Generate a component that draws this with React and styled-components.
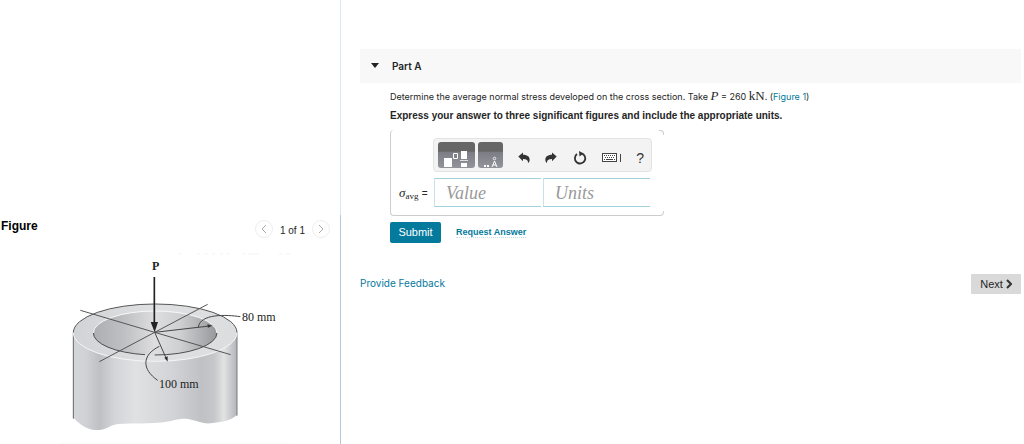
import React from "react";
import styled, { createGlobalStyle } from "styled-components";

const Global = createGlobalStyle`
  * { box-sizing: border-box; }
  body {
    margin: 0;
    background: #fff;
    color: #252525;
    font-family: "Liberation Sans", Arial, sans-serif;
    font-size: 9px;
    line-height: 12px;
  }
  button, input { font: inherit; color: inherit; margin: 0; }
  button { border: 0; padding: 0; cursor: pointer; }
  svg { display: block; }
`;

const Page = styled.div`
  display: grid;
  grid-template-columns: 341px minmax(0, 1fr);
  min-height: 100vh;
`;

const FigurePane = styled.aside`
  padding: 219px 1px 0 0;
  background: linear-gradient(#d9e7f3 0 215px, #b4c8da 215px) right / 1px 100% no-repeat;
`;

const FigureBar = styled.header`
  display: flex;
  align-items: center;
  justify-content: space-between;
  height: 20px;
  padding: 0 10px 0 1px;
`;

const FigureTitle = styled.h2`
  margin: 0 0 6px;
  font-size: 12px;
  line-height: 14px;
  color: #000;
`;

const Pager = styled.nav`
  display: flex;
  align-items: center;
  gap: 7px;
  font-size: 10px;
  line-height: 14px;
`;

const PageCount = styled.span`
  padding-top: 4px;
`;

const PagerButton = styled.button`
  display: grid;
  place-items: center;
  width: 18px;
  height: 18px;
  border: 1px solid #eee;
  border-radius: 50%;
  background: #fff;
`;

const Drawing = styled.svg`
  margin: 11px 0 0 60px;
`;

const Label = styled.text`
  font-family: "Liberation Serif", serif;
  font-size: 12px;
  font-weight: ${(p) => (p.$bold ? 700 : 400)};
  fill: #222;
`;

const Main = styled.main`
  padding: 49px 3px 0 19px;
`;

const PartHeader = styled.header`
  display: flex;
  align-items: center;
  gap: 13px;
  height: 34px;
  padding: 0 0 1px 11px;
  background: #f8f8f8;
`;

const PartTitle = styled.h1`
  margin: 0;
  font-family: Inter, sans-serif;
  font-size: 10px;
  font-weight: 600;
  line-height: 14px;
`;

const Toggle = styled.button`
  background: none;
`;

const Body = styled.section`
  padding: 7px 0 0 30px;
`;

const Question = styled.p`
  margin: 0 0 7px;
  font-family: Inter, sans-serif;
`;

const Instruction = styled.p`
  margin: 0 0 8px;
  font-size: 10px;
  font-weight: 700;
`;

const Var = styled.span`
  font-family: "Liberation Serif", serif;
  font-size: 13px;
  line-height: 12px;
  font-style: ${(p) => (p.$italic ? "italic" : "normal")};
`;

const Link = styled.a`
  color: #047a9c;
  text-decoration: none;
`;

const AnswerBox = styled.div`
  position: relative;
  width: 274px;
  padding: 8px 12px 8px 8px;
  border-left: 1px solid #ccc;
  border-bottom: 1px solid #ccc;
  border-radius: 4px;

  &::before, &::after {
    content: "";
    position: absolute;
    right: 0;
    width: 4px;
    height: 4px;
    border-right: 1px solid #ccc;
  }
  &::before { top: 0; border-top: 1px solid #ccc; border-top-right-radius: 4px; }
  &::after { bottom: 0; border-bottom-right-radius: 4px; }
`;

const Toolbar = styled.div`
  display: flex;
  align-items: center;
  height: 34px;
  margin-left: 34px;
  padding: 0 7px 0 4px;
  border: 1px solid #e3e3e3;
  border-radius: 4px;
  background: #f3f3f3;
`;

const PaletteButton = styled.button`
  width: ${(p) => p.$width}px;
  height: 26px;
  margin-right: 3px;
  border-radius: 3px;
  overflow: hidden;
  background: linear-gradient(#666 0 36%, #7c7c84 38%, #94949c 100%);
`;

const Tools = styled.div`
  display: flex;
  justify-content: space-between;
  flex: 1;
  margin-left: 12px;
  padding-top: 5px;
`;

const Tool = styled.button`
  display: grid;
  place-items: center;
  height: 26px;
  background: none;
  color: #333;
  font-size: 14px;
`;

const EntryRow = styled.div`
  display: flex;
  align-items: center;
  margin-top: 6px;
`;

const Symbol = styled.label`
  width: 35px;
  font-family: "Liberation Serif", serif;
  font-size: 13px;
  line-height: 14px;
  white-space: nowrap;

  sub { font-size: 9px; line-height: 0; vertical-align: -2px; }
  b { font: 10px "Liberation Sans", sans-serif; }
`;

const Entry = styled.input`
  width: 107px;
  height: 29px;
  margin-right: 2px;
  padding: 1px 11px 0;
  border: solid #a3d0dc;
  border-width: 1px 0 1px 1px;
  border-left-color: #c6e2ea;
  border-radius: 0;
  outline: 0;
  font: italic 18px "Liberation Serif", serif;

  &::placeholder { color: #999; opacity: 1; }
`;

const Actions = styled.div`
  display: flex;
  align-items: center;
  gap: 15px;
  margin-top: 6px;
`;

const Submit = styled.button`
  width: 51px;
  height: 21px;
  padding-bottom: 2px;
  border-radius: 2px;
  background: #047a9c;
  color: #fff;
  font-size: 11px;
`;

const RequestLink = styled(Link)`
  font-weight: 700;
  border-bottom: 1px dotted #c5e0e8;
  line-height: 10px;
`;

const Footer = styled.footer`
  display: flex;
  align-items: center;
  justify-content: space-between;
  margin-top: 31px;
`;

const FeedbackLink = styled(Link)`
  padding-bottom: 2px;
  font-family: Inter, sans-serif;
  font-size: 10px;
`;

const Next = styled.button`
  display: flex;
  align-items: center;
  justify-content: center;
  gap: 3px;
  width: 50px;
  height: 20px;
  border-radius: 1px;
  background: #d9d9d9;
  font-size: 11px;
`;

const Chevron = ({ left }) => (
  <svg width="8" height="10" viewBox="0 0 8 10" fill="none" stroke="#aaa" strokeWidth="1">
    <path d={left ? "M6 1 2 5l4 4" : "M2 1l4 4-4 4"} />
  </svg>
);

const CurvedArrow = ({ flip }) => (
  <svg width="12" height="12" viewBox="0 0 12 12" fill="#333">
    <path
      transform={flip ? "matrix(-1 0 0 1 12 0)" : undefined}
      d="M0.300 4.600 5 0.500v2.300c4.600 0 7 2.400 6.600 5.400-.1 1.300-.7 2.200-1.600 2.900.3-2.800-1.300-4.200-5-4.200v2.300z"
    />
  </svg>
);

const Cylinder = () => (
  <Drawing width="230" height="194" viewBox="0 0 230 194" role="img" aria-label="Hollow cylinder under load P">
    <defs>
      <linearGradient id="wall">
        <stop offset="0" stopColor="#d4d5d9" />
        <stop offset="0.08" stopColor="#d0d1d4" />
        <stop offset="0.16" stopColor="#bfc0c4" />
        <stop offset="0.25" stopColor="#d3d4d7" />
        <stop offset="0.38" stopColor="#e0e1e3" />
        <stop offset="0.6" stopColor="#d3d4d7" />
        <stop offset="0.78" stopColor="#c0c1c5" />
        <stop offset="0.86" stopColor="#c6c7ca" />
        <stop offset="0.92" stopColor="#e2e2e4" />
        <stop offset="1" stopColor="#b4b5b9" />
      </linearGradient>
      <linearGradient id="rim">
        <stop offset="0" stopColor="#d2d3d6" />
        <stop offset="0.5" stopColor="#dfe0e2" />
        <stop offset="1" stopColor="#dcdddf" />
      </linearGradient>
      <linearGradient id="bore">
        <stop offset="0" stopColor="#adaeb2" />
        <stop offset="0.25" stopColor="#bfc0c3" />
        <stop offset="0.5" stopColor="#dedee0" />
        <stop offset="0.7" stopColor="#cfd0d2" />
        <stop offset="1" stopColor="#97989c" />
      </linearGradient>
    </defs>
    <path d="M118 4h3M137 4h3M144 4h4M152 4h3M160 4h3M166 4h4M182 4h4M188 4h11M219 4h4M226 4h4" stroke="#f3f3f3" />
    <path d="M0 193h230" stroke="#fafafa" />
    <g transform="scale(.33333)" fill="none" strokeWidth="3" stroke="#555">
      <path fill="url(#wall)" stroke="none" d="M40 248V503C65 530 90 541 115 540C142 539 150 524 175 522C220 520 270 522 310 517C338 513 350 506 375 506C405 507 425 523 452 520C485 515 510 514 531 495V248z" />
      <path d="M40 248V506" stroke="#666" />
      <path d="M531 248V497" stroke="#777" />
      <ellipse cx="285.500" cy="248" rx="245.500" ry="86" fill="url(#rim)" stroke="none" />
      <path d="M40 248A245.500 86 0 0 1 531 248" stroke="#555" />
      <path d="M40 248A245.500 86 0 0 0 531 248" stroke="#f5f5f6" />
      <ellipse cx="285.500" cy="249" rx="185.500" ry="66" fill="url(#bore)" stroke="none" />
      <path d="M100 249A185.500 66 0 0 1 471 249" stroke="#f8f8f8" />
      <path d="M100 249A185.500 66 0 0 0 255 314M284 315A185.500 66 0 0 0 471 249" stroke="#4c4c4e" />
      <path d="M61 181 284 247 512 314M118 335 284 247 443 163" />
      <path d="M284 247 449 228M284 247 320 328M541 200C500 194 420 190 415 232M298 289C245 315 245 358 293 391" stroke="#444" />
      <path d="M283 81V220" stroke="#222" strokeWidth="5" />
      <path d="M272 216h22l-10 31z" fill="#222" stroke="none" />
      <path d="M457 227 442 223l2 10zM323 335 313 323l10-4z" fill="#333" stroke="none" />
    </g>
    <Label x="92" y="20" $bold>P</Label>
    <Label x="182" y="71">80 mm</Label>
    <Label x="99" y="138">100 mm</Label>
  </Drawing>
);

export default function App() {
  return (
    <>
      <Global />
      <Page>
        <FigurePane>
          <FigureBar>
            <FigureTitle>Figure</FigureTitle>
            <Pager aria-label="Figures">
              <PagerButton aria-label="Previous figure"><Chevron left /></PagerButton>
              <PageCount>1 of 1</PageCount>
              <PagerButton aria-label="Next figure"><Chevron /></PagerButton>
            </Pager>
          </FigureBar>
          <Cylinder />
        </FigurePane>
        <Main>
          <PartHeader>
            <Toggle aria-label="Collapse part">
              <svg width="8" height="5" viewBox="0 0 8 5"><path d="M0 0h8L4 5z" fill="#222" /></svg>
            </Toggle>
            <PartTitle>Part A</PartTitle>
          </PartHeader>
          <Body>
            <Question>
              Determine the average normal stress developed on the cross section. Take{" "}
              <Var $italic>P</Var> = 260 <Var>kN</Var>. (<Link href="#figure">Figure 1</Link>)
            </Question>
            <Instruction>
              Express your answer to three significant figures and include the appropriate units.
            </Instruction>
            <AnswerBox>
              <Toolbar>
                <PaletteButton $width={37} aria-label="Templates">
                  <svg width="37" height="26" viewBox="0 0 37 26">
                    <path d="M6 16h8v9H6zM23 9h6v8h-6zM23 21h6v4h-6z" fill="#fff" />
                    <path d="M22 18.500h8" stroke="#ddd" />
                    <path d="M15.500 11.500h4v5h-4z" fill="none" stroke="#fff" />
                  </svg>
                </PaletteButton>
                <PaletteButton $width={25} aria-label="Symbols">
                  <svg width="25" height="26" viewBox="0 0 25 26" fill="none" stroke="#fff">
                    <path d="M6 24h2M9 24h2" strokeWidth="2" />
                    <circle cx="16.500" cy="16.500" r="1.300" strokeWidth="0.800" />
                    <path d="M14 25l2.500-6 2.500 6M15 23h3" />
                  </svg>
                </PaletteButton>
                <Tools>
                  <Tool aria-label="Undo"><CurvedArrow /></Tool>
                  <Tool aria-label="Redo"><CurvedArrow flip /></Tool>
                  <Tool aria-label="Reset">
                    <svg width="14" height="14" viewBox="0 0 14 14">
                      <path d="M8.500 2.300A5.200 5.200 0 1 1 4 3.100" fill="none" stroke="#333" strokeWidth="1.800" />
                      <path d="M6 0l4.500 2.500L6.500 5.500z" fill="#333" />
                    </svg>
                  </Tool>
                  <Tool aria-label="Keyboard shortcuts">
                    <svg width="19" height="10" viewBox="0 0 19 10" fill="none" stroke="#444">
                      <rect x=".5" y=".5" width="14" height="8" fill="#fff" />
                      <path d="M2 2.500h11M3 4.500h10" strokeDasharray="1 1" />
                      <path d="M2 6.500h1M4 6.500h7M12 6.500h1M18.500 1v8" />
                    </svg>
                  </Tool>
                  <Tool aria-label="Help">?</Tool>
                </Tools>
              </Toolbar>
              <EntryRow>
                <Symbol htmlFor="value"><i>σ</i><sub>avg</sub> <b>=</b></Symbol>
                <Entry id="value" placeholder="Value" />
                <Entry aria-label="Units" placeholder="Units" />
              </EntryRow>
            </AnswerBox>
            <Actions>
              <Submit>Submit</Submit>
              <RequestLink href="#answer">Request Answer</RequestLink>
            </Actions>
          </Body>
          <Footer>
            <FeedbackLink href="#feedback">Provide Feedback</FeedbackLink>
            <Next>
              Next
              <svg width="6" height="10" viewBox="0 0 6 10" fill="none" stroke="#333" strokeWidth="2"><path d="M1 1l4 4-4 4" /></svg>
            </Next>
          </Footer>
        </Main>
      </Page>
    </>
  );
}
